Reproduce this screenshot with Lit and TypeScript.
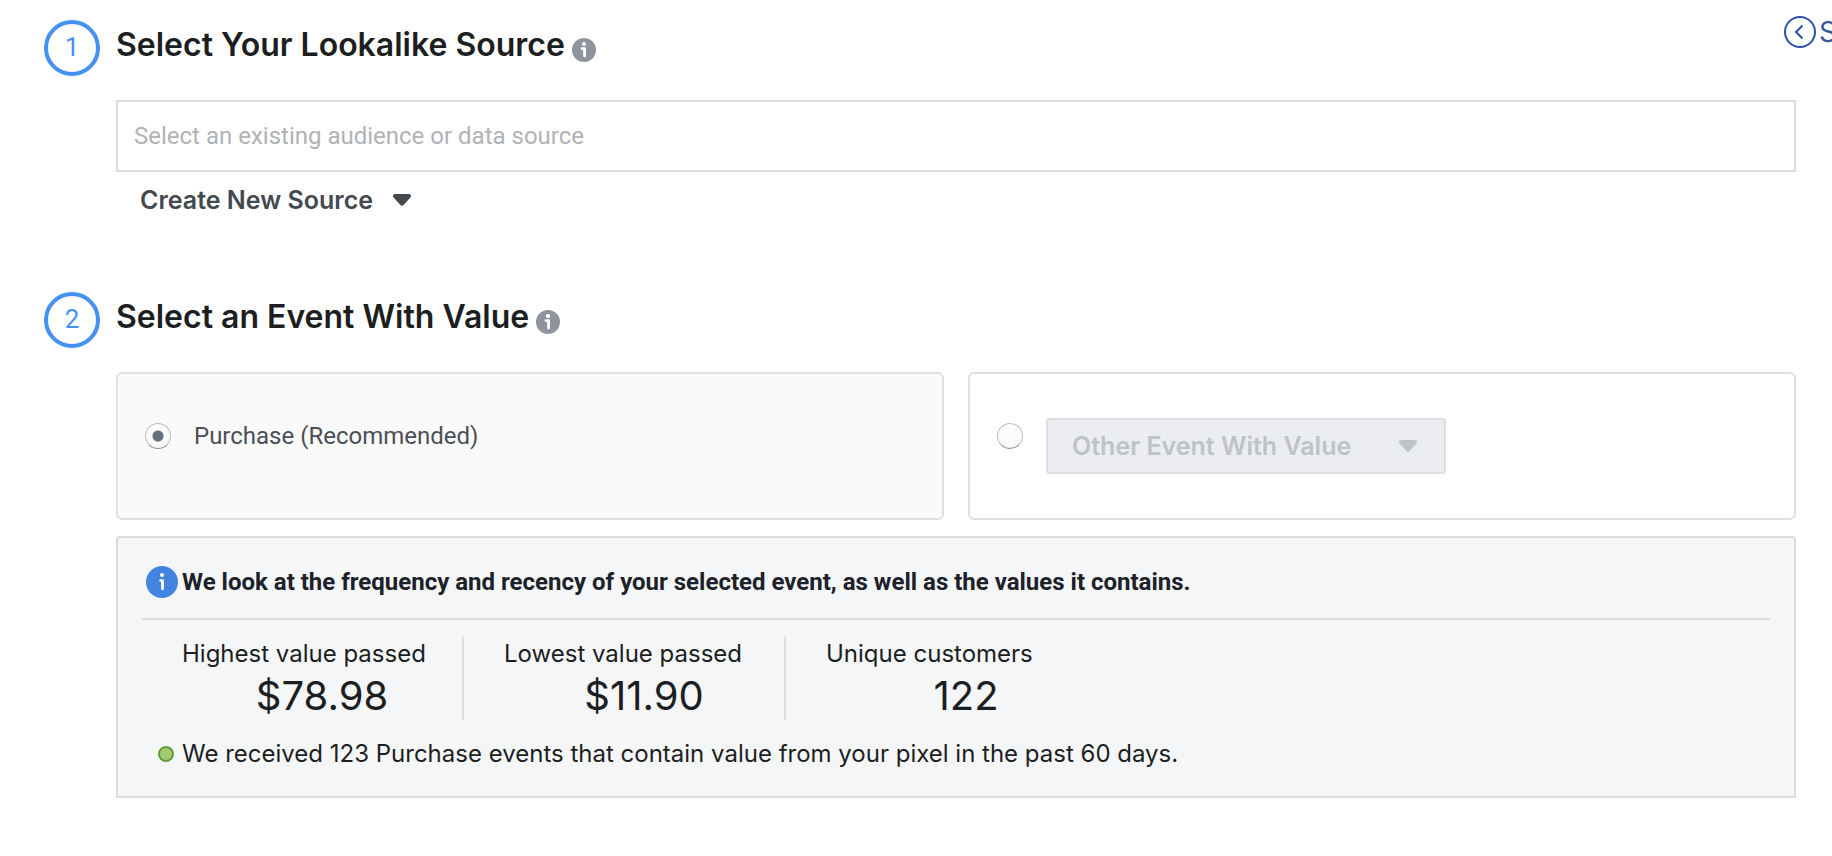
import { LitElement, html, css, svg } from "lit";
import { customElement, property, state } from "lit/decorators.js";

const caret = html`<svg class="caret" viewBox="0 0 18 12" aria-hidden="true">
  <path d="M2 0H16Q18 0 18 2Q18 3 17.2 3.8L10.6 10.9Q9 12.4 7.4 10.9L0.8 3.8Q0 3 0 2Q0 0 2 0Z" fill="currentColor" />
</svg>`;

const infoGlyph = svg`<circle cx="12" cy="12" r="12" fill="currentColor" />
  <circle cx="12" cy="6" r="2.1" fill="#fff" />
  <path d="M10 10.6H12.6V18" fill="none" stroke="#fff" stroke-width="2.8" stroke-linecap="round" stroke-linejoin="round" />`;

const noteGlyph = svg`<circle cx="16" cy="16" r="16" fill="currentColor" />
  <circle cx="16" cy="9" r="2.1" fill="#fff" />
  <path d="M14.6 14.6H16.5V22.8" fill="none" stroke="#fff" stroke-width="2.8" stroke-linecap="round" stroke-linejoin="round" />`;

@customElement("step-section")
class StepSection extends LitElement {
  @property({ type: Number }) step = 1;
  @property() heading = "";

  static styles = css`
    :host {
      display: grid;
      grid-template-columns: 56px minmax(0, 1fr);
      column-gap: 16px;
    }
    .badge {
      box-sizing: border-box;
      width: 56px;
      height: 56px;
      border: 4px solid #4590f2;
      border-radius: 50%;
      color: #4590f2;
      font: 400 26px/46px Roboto, sans-serif;
      text-align: center;
    }
    .head {
      display: flex;
      align-items: flex-start;
      gap: 7px;
      height: 80px;
    }
    h2 {
      margin: 5px 0 0;
      font: 600 32px/40px Inter, sans-serif;
      color: #1c1e21;
    }
    .info {
      width: 24px;
      height: 24px;
      margin-top: 18px;
      color: #8d949e;
    }
  `;

  render() {
    return html`
      <div class="badge">${this.step}</div>
      <div>
        <div class="head">
          <h2>${this.heading}</h2>
          <svg class="info" viewBox="0 0 24 24" aria-hidden="true">${infoGlyph}</svg>
        </div>
        <slot></slot>
      </div>
    `;
  }
}

@customElement("app-root")
class AppRoot extends LitElement {
  @state() private choice = "purchase";

  private stats = [
    { label: "Highest value passed", value: "$78.98" },
    { label: "Lowest value passed", value: "$11.90" },
    { label: "Unique customers", value: "122" },
  ];

  static styles = css`
    :host {
      display: block;
      position: relative;
      overflow: hidden;
      min-height: 100vh;
      box-sizing: border-box;
      padding: 20px 36px 20px 44px;
      background: #fff;
      color: #1c1e21;
      font: 400 24px/32px Inter, sans-serif;
    }
    .back {
      position: absolute;
      top: 16px;
      right: -5px;
      display: flex;
      align-items: center;
      gap: 3px;
      color: #3b5998;
      font: 400 28px/32px Inter, sans-serif;
      text-decoration: none;
    }
    .back svg {
      width: 32px;
      height: 32px;
    }
    .source {
      display: block;
      box-sizing: border-box;
      width: 100%;
      height: 72px;
      padding: 0 16px;
      border: 2px solid #dadbdd;
      border-radius: 0;
      outline: none;
      background: #fff;
      color: #1c1e21;
      font: 400 24px/32px Roboto, sans-serif;
    }
    .source::placeholder {
      color: #b0b2b6;
      opacity: 1;
    }
    .create {
      display: flex;
      align-items: center;
      gap: 20px;
      height: 56px;
      padding: 0 24px;
      border: 0;
      background: none;
      color: #444950;
      font: 600 25px/32px Inter, sans-serif;
    }
    .caret {
      width: 18px;
      height: 12px;
    }
    .first {
      margin-bottom: 64px;
    }
    .options {
      display: grid;
      grid-template-columns: 1fr 1fr;
      gap: 24px;
      margin-bottom: 16px;
    }
    .option {
      display: flex;
      align-items: flex-start;
      gap: 23px;
      box-sizing: border-box;
      height: 148px;
      padding: 44px 27px;
      border: 2px solid #dddfe2;
      border-radius: 6px;
      background: #fff;
      color: #4b4f56;
      font-family: Roboto, sans-serif;
    }
    .option.on {
      background: #fafafa;
    }
    .option input {
      appearance: none;
      box-sizing: border-box;
      width: 26px;
      height: 26px;
      margin: 5px 0 0;
      border: 1px solid #bcbec0;
      border-bottom-color: #929496;
      border-radius: 50%;
      background: linear-gradient(#fff, #f5f6f7);
    }
    .option input:checked {
      background: radial-gradient(circle, #666d7c 0 5px, transparent 6px),
        linear-gradient(#fff, #f5f6f7);
    }
    .option label {
      margin-top: 2px;
    }
    .other {
      display: flex;
      align-items: center;
      justify-content: space-between;
      box-sizing: border-box;
      width: 400px;
      height: 56px;
      padding: 0 27px 0 24px;
      border: 2px solid #dadde1;
      border-radius: 4px;
      background: #ebedf0;
      color: #bec3c9;
      font: 600 25px/32px Inter, sans-serif;
    }
    .panel {
      box-sizing: border-box;
      padding: 28px 24px 24px;
      border: 2px solid #dadcde;
      border-radius: 4px 4px 0 0;
      background: #f5f6f8;
    }
    .note {
      display: flex;
      align-items: center;
      gap: 4px;
      padding: 0 4px 20px;
      border-bottom: 2px solid #dadcde;
      font: 700 24px/32px Roboto, sans-serif;
      color: #1d2129;
    }
    .note svg {
      width: 32px;
      height: 32px;
      color: #4484e1;
    }
    .stats {
      display: flex;
      gap: 40px;
      margin: 16px 0;
      padding-left: 40px;
    }
    .stat {
      width: 280px;
      height: 84px;
      border-right: 2px solid #dddfe2;
    }
    .stat:last-child {
      border-right: 0;
    }
    .stat dt {
      line-height: 36px;
    }
    .stat dd {
      margin: 0;
      font-size: 40px;
      line-height: 48px;
      text-align: center;
    }
    .status {
      display: flex;
      align-items: center;
      gap: 8px;
      margin: 0;
      padding-left: 16px;
      line-height: 36px;
    }
    .dot {
      box-sizing: border-box;
      width: 16px;
      height: 16px;
      border: 2px solid #629c38;
      border-radius: 50%;
      background: #a3c971;
    }
  `;

  private pick(e: Event) {
    this.choice = (e.target as HTMLInputElement).value;
  }

  render() {
    return html`
      <a class="back" href="#">
        <svg viewBox="0 0 32 32" fill="none" stroke="#2851a8" stroke-width="2" aria-hidden="true">
          <circle cx="16" cy="16" r="15" />
          <path d="M18.5 9.5L12 16L18.5 22.5" />
        </svg>
        <span>S</span>
      </a>

      <step-section class="first" step="1" heading="Select Your Lookalike Source">
        <input
          class="source"
          type="text"
          aria-label="Select Your Lookalike Source"
          placeholder="Select an existing audience or data source"
        />
        <button class="create" type="button">Create New Source ${caret}</button>
      </step-section>

      <step-section step="2" heading="Select an Event With Value">
        <div class="options">
          <div class="option ${this.choice === "purchase" ? "on" : ""}">
            <input type="radio" name="event" id="purchase" value="purchase"
              .checked=${this.choice === "purchase"} @change=${this.pick} />
            <label for="purchase">Purchase (Recommended)</label>
          </div>
          <div class="option ${this.choice === "other" ? "on" : ""}">
            <input type="radio" name="event" value="other" aria-labelledby="other-event"
              .checked=${this.choice === "other"} @change=${this.pick} />
            <button class="other" id="other-event" type="button" ?disabled=${this.choice !== "other"}>
              Other Event With Value ${caret}
            </button>
          </div>
        </div>

        <div class="panel">
          <div class="note">
            <svg viewBox="0 0 32 32" aria-hidden="true">${noteGlyph}</svg>
            <span>We look at the frequency and recency of your selected event, as well as the values it contains.</span>
          </div>
          <dl class="stats">
            ${this.stats.map(
              (s) => html`<div class="stat"><dt>${s.label}</dt><dd>${s.value}</dd></div>`
            )}
          </dl>
          <p class="status">
            <span class="dot"></span>
            <span>We received 123 Purchase events that contain value from your pixel in the past 60 days.</span>
          </p>
        </div>
      </step-section>
    `;
  }
}
